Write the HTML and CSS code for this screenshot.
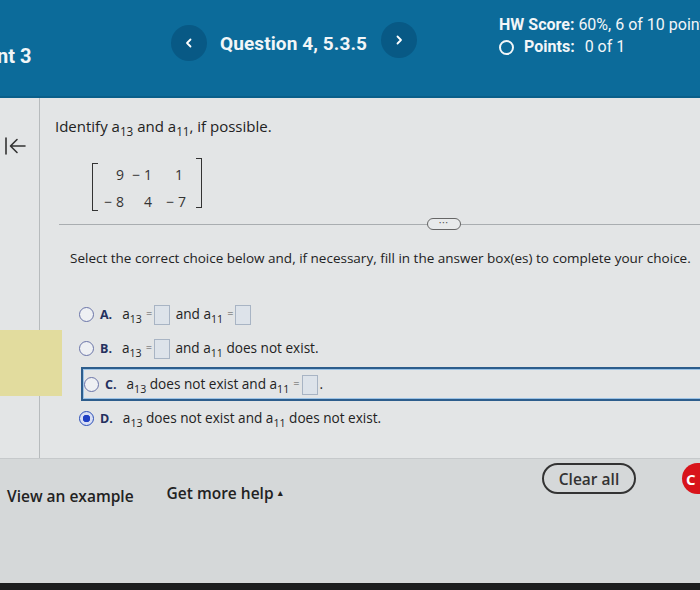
FILE: index.html
```html
<!DOCTYPE html>
<html>
<head>
<meta charset="utf-8">
<link rel="stylesheet" href="styles.css">
</head>
<body>
<div class="page">
  <header class="top">
    <div class="crumb">nt 3</div>
    <div class="nav">
      <span class="circ"><svg width="10" height="12" viewBox="0 0 10 12"><path d="M6.5 2.5 L3 6 L6.5 9.5" fill="none" stroke="#fff" stroke-width="1.8" stroke-linecap="round" stroke-linejoin="round"/></svg></span>
      <span class="qtitle">Question 4, 5.3.5</span>
      <span class="circ next"><svg width="10" height="12" viewBox="0 0 10 12"><path d="M3.5 2.5 L7 6 L3.5 9.5" fill="none" stroke="#fff" stroke-width="1.8" stroke-linecap="round" stroke-linejoin="round"/></svg></span>
    </div>
    <div class="score">
      <div><b>HW Score:</b> 60%, 6 of 10 points</div>
      <div class="pts"><span class="ring"></span><b>Points:</b> 0 of 1</div>
    </div>
  </header>
  <main class="body">
    <aside class="side">
      <svg class="back" width="24" height="20" viewBox="0 0 24 20"><path d="M2 2 V18 M21 10 H7 M13 3.5 L6.5 10 L13 16.5" fill="none" stroke="#333" stroke-width="1.6" stroke-linecap="round" stroke-linejoin="round"/></svg>
      <div class="note"></div>
    </aside>
    <section class="content">
      <p class="prompt">Identify a<sub>13</sub> and a<sub>11</sub>, if possible.</p>
      <div class="matrix">
        <span class="br l"></span>
        <div class="cells">
          <span>9</span><span>− 1</span><span>1</span>
          <span>− 8</span><span>4</span><span>− 7</span>
        </div>
        <span class="br r"></span>
      </div>
      <div class="sep"><span class="dots">•••</span></div>
      <p class="instr">Select the correct choice below and, if necessary, fill in the answer box(es) to complete your choice.</p>
      <div class="opts">
        <div class="opt"><span class="radio"></span><b>A.</b><span class="txt">a<sub>13</sub><span class="eq">=</span><span class="box"></span> and a<sub>11</sub><span class="eq">=</span><span class="box"></span></span></div>
        <div class="opt"><span class="radio"></span><b>B.</b><span class="txt">a<sub>13</sub><span class="eq">=</span><span class="box"></span> and a<sub>11</sub> does not exist.</span></div>
        <div class="opt focus"><span class="radio"></span><b>C.</b><span class="txt">a<sub>13</sub> does not exist and a<sub>11</sub><span class="eq">=</span><span class="box"></span>.</span></div>
        <div class="opt"><span class="radio on"></span><b>D.</b><span class="txt">a<sub>13</sub> does not exist and a<sub>11</sub> does not exist.</span></div>
      </div>
    </section>
  </main>
  <footer class="foot">
    <span class="link">View an example</span>
    <span class="link help">Get more help <span class="caret">▴</span></span>
    <span class="clear">Clear all</span>
    <span class="check">C</span>
  </footer>
  <div class="edge"></div>
</div>
</body>
</html>
```
FILE: styles.css
```css
* { box-sizing: border-box; }
html, body { margin: 0; padding: 0; }
body {
  width: 700px; height: 590px; overflow: hidden;
  font-family: "Open Sans", "Liberation Sans", sans-serif;
  color: #222;
  background: #e3e5e6;
}
.page { display: flex; flex-direction: column; height: 590px; }
.top {
  height: 98px; flex: none;
  background: #0c6b9a;
  color: #f2f6f8;
  display: flex; align-items: flex-start;
  font-family: Roboto, "Liberation Sans", sans-serif;
  border-bottom: 2px solid #0a5f8a;
  overflow: hidden;
}
.crumb { font-weight: 700; font-size: 20px; margin: 44px 0 0 -3px; width: 174px; flex: none; }
.nav { display: flex; align-items: center; margin-top: 25px; flex: none; }
.circ {
  width: 36px; height: 36px; border-radius: 50%; flex: none;
  background: #085985; display: flex; align-items: center; justify-content: center;
}
.qtitle { font-weight: 700; font-size: 19px; margin: 0 14px 0 13px; letter-spacing: 0.1px; }
.next { margin-top: -6px; }
.score { margin: 14px 0 0 82px; font-size: 16px; line-height: 22px; white-space: nowrap; flex: none; }
.score b { font-weight: 700; }
.pts { display: flex; align-items: center; gap: 10px; }
.ring { width: 15px; height: 15px; border: 2px solid #f2f6f8; border-radius: 50%; }
.body { flex: 1; display: flex; min-height: 0; }
.side {
  width: 40px; flex: none; border-right: 1px solid #b7bbbd;
  display: flex; flex-direction: column; position: relative;
}
.back { margin: 38px 0 0 4px; }
.note {
  position: absolute; left: 0; top: 232px; width: 62px; height: 66px;
  background: #e2dc9e;
}
.content { flex: 1; padding-left: 15px; position: relative; min-width: 0; }
.prompt { margin: 18px 0 0 0; font-size: 15px; }
sub { font-size: 0.78em; vertical-align: -0.35em; line-height: 0; }
.matrix { display: flex; align-items: flex-start; margin: 22px 0 0 37px; height: 54px; width: 110px; }
.br { width: 6px; border: 1.5px solid #333; }
.br.l { border-right: none; margin-top: 5px; height: 48px; }
.br.r { border-left: none; height: 50px; }
.cells {
  flex: none; width: 98px; display: grid; grid-template-columns: 26px 28px 34px;
  grid-auto-rows: 27px; align-items: center;
  font-size: 14px; justify-items: end; padding: 3px 10px 0 0; color: #333;
}
.cells span:nth-child(3) { margin-right: 3px; }
.sep { height: 1px; background: #a9adb0; margin: 12px 0 0 4px; position: relative; }
.dots {
  position: absolute; left: 368px; top: -6px; width: 34px; height: 12px;
  border: 1.5px solid #666; border-radius: 6px; background: #e8eaeb;
  font-size: 6px; color: #555; text-align: center; line-height: 9px; letter-spacing: 1px;
}
.instr { margin: 24px 0 0 15px; font-size: 13.5px; white-space: nowrap; }
.opts { margin: 30px 0 0 24px; display: flex; flex-direction: column; }
.opt { height: 34px; display: flex; align-items: center; font-size: 13.6px; }
.opt b { font-weight: 700; font-size: 12.5px; color: #24305e; margin: 0 10px 0 6px; }
.radio {
  width: 15px; height: 15px; border-radius: 50%; border: 1.5px solid #6a74a8; background: #eef0f3;
  flex: none;
}
.radio.on { border: 1.5px solid #2b4fb8; background: radial-gradient(circle, #1f3fc4 0 3.5px, #d8def4 4px); }
.txt { display: block; white-space: nowrap; line-height: 20px; }
.eq { font-size: 11px; color: #555; margin: 0 2px 0 4px; vertical-align: 2px; }
.box {
  display: inline-block; width: 16px; height: 20px; vertical-align: middle;
  background: #dde3ea; border: 1px solid #a8b4c4; margin-right: 2px;
}
.opt.focus {
  margin: 2px -30px 0 2px; padding-left: 1px; height: 34px;
  border: 2px solid #2d5d8c; border-right: none;
  box-shadow: inset 0 0 0 1px #9cc3e6;
}
.foot {
  height: 125px; flex: none; background: #d5d8d9; border-top: 1px solid #c6c9cb;
  display: flex; align-items: flex-start; position: relative; overflow: hidden;
}
.link { font-weight: 600; font-size: 15.5px; color: #222; margin: 26px 0 0 7px; }
.help { margin: 23px 0 0 33px; }
.caret { font-size: 9px; vertical-align: 3px; }
.clear {
  margin: 4px 0 0 auto; width: 94px; height: 31px; border: 2px solid #333; border-radius: 16px;
  font-size: 15.5px; font-weight: 600; color: #333; display: flex; align-items: center; justify-content: center;
}
.check {
  margin: 4px -16px 0 46px; width: 34px; height: 31px; border-radius: 16px; background: #d8141b;
  color: #fff; font-weight: 700; font-size: 15px; display: flex; align-items: center; padding-left: 4px;
  flex: none;
}
.edge { height: 7px; background: #1c1d1e; flex: none; }
```
